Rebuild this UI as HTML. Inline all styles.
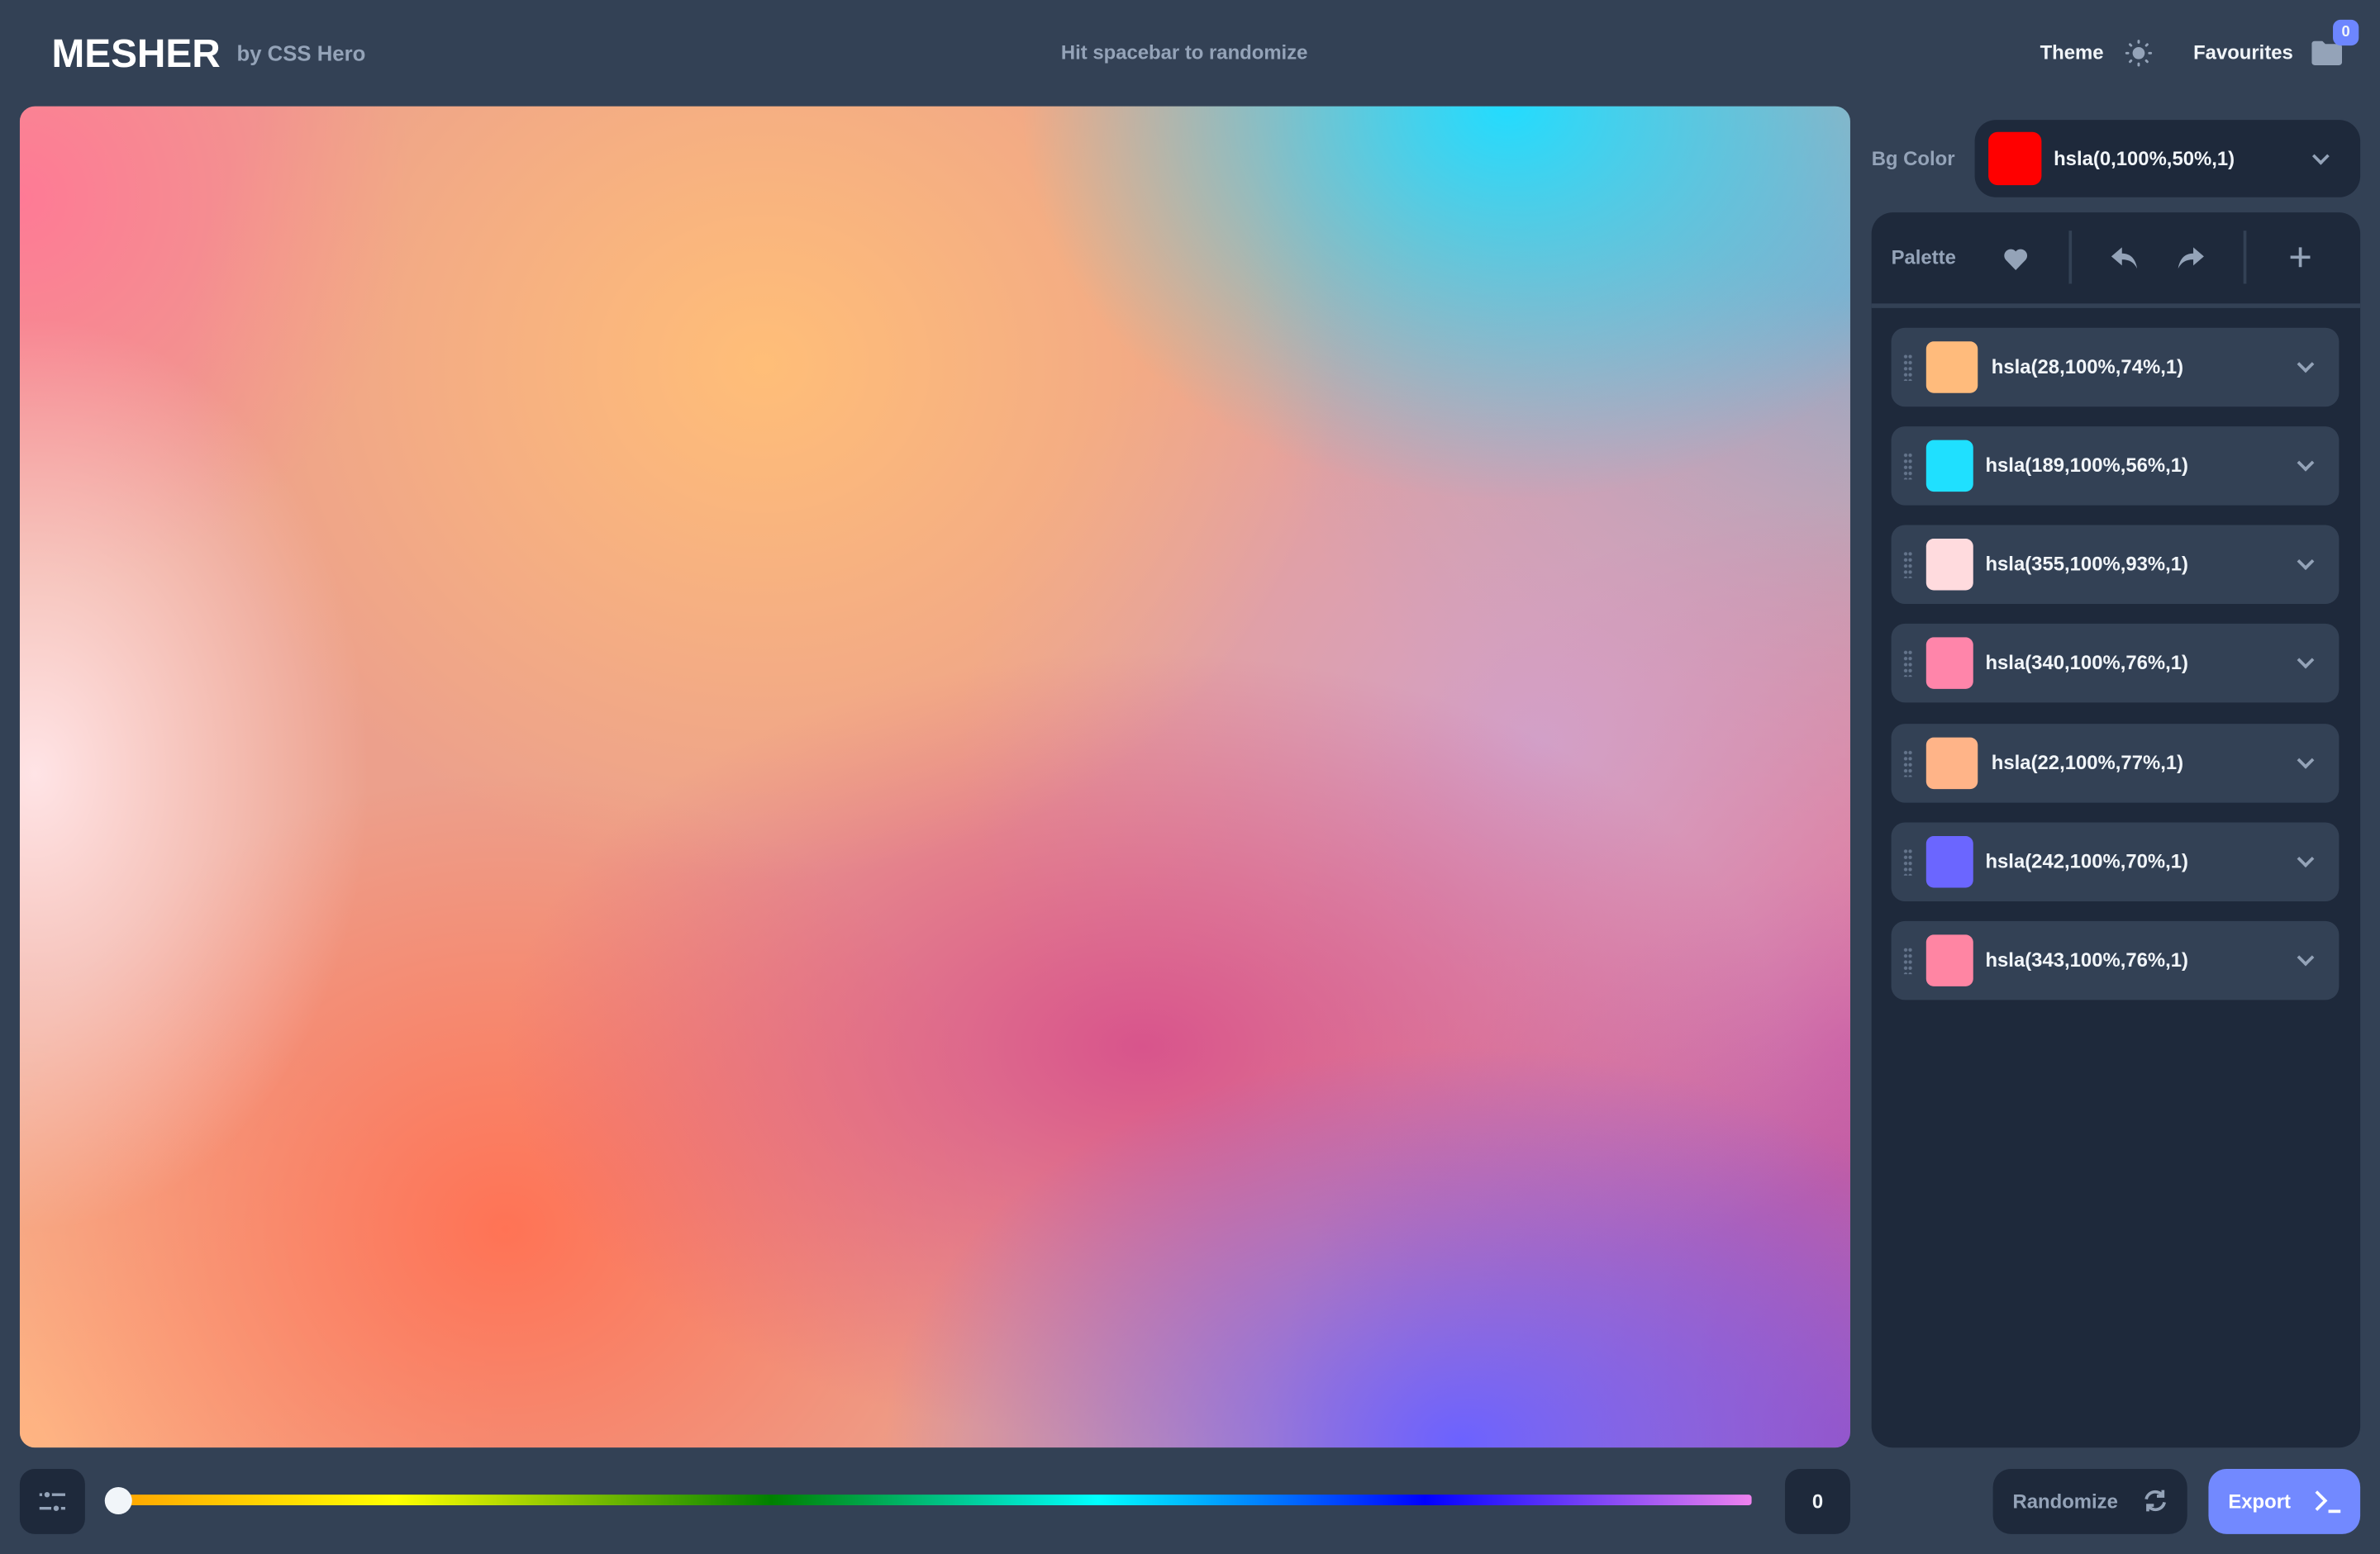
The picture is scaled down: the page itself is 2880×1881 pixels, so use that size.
<!DOCTYPE html>
<html><head><meta charset="utf-8"><style>
*{box-sizing:border-box;margin:0;padding:0}
html,body{width:2880px;height:1880px;overflow:hidden;background:#334155}
#w{position:absolute;left:0;top:0;width:1568px;height:1024px;transform:scale(1.83673);transform-origin:0 0;font-family:"Liberation Sans",sans-serif;font-weight:bold;color:#f1f5f9}
.a{position:absolute}
.canvas{left:13px;top:70px;width:1206px;height:884px;border-radius:10px;background:
radial-gradient(ellipse 320px 260px at 980px 0px,rgba(34,220,255,1),rgba(34,220,255,0)),
radial-gradient(ellipse 380px 340px at 490px 170px,rgba(255,190,120,1),rgba(255,190,120,0)),
radial-gradient(ellipse 220px 300px at 10px 440px,rgba(255,228,230,1),rgba(255,228,230,0)),
radial-gradient(ellipse 260px 260px at 0px 60px,rgba(255,120,150,.95),rgba(255,120,150,0)),
radial-gradient(ellipse 380px 260px at 950px 880px,rgba(108,98,255,1),rgba(108,98,255,0)),
radial-gradient(ellipse 420px 260px at 740px 620px,rgba(215,80,140,.95),rgba(215,80,140,0)),
radial-gradient(ellipse 340px 300px at 320px 740px,rgba(255,115,85,1),rgba(255,115,85,0)),
radial-gradient(ellipse 380px 340px at 1000px 420px,rgba(210,160,200,1),rgba(210,160,200,0)),
radial-gradient(ellipse 380px 380px at 1206px 884px,rgba(165,80,180,1),rgba(165,80,180,0)),
radial-gradient(ellipse 380px 360px at 1206px 620px,rgba(220,90,150,1),rgba(220,90,150,0)),
radial-gradient(ellipse 320px 320px at 0 884px,rgba(255,180,130,1),rgba(255,180,130,0)),
radial-gradient(ellipse 400px 360px at 1206px 120px,rgba(140,170,200,1),rgba(140,170,200,0)),
#eca08c}
.dd{background:#1e293b;border-radius:14px}
.row{left:1246px;width:295px;height:52px;background:#334155;border-radius:9px}
.sw{position:absolute;left:23px;top:9px;width:33px;height:34px;border-radius:5px}
.row .t{position:absolute;left:62px;top:18px;font-size:13px}
.chev{position:absolute;right:18px;top:20px;width:8px;height:8px;border-right:2px solid #94a3b8;border-bottom:2px solid #94a3b8;transform:rotate(45deg)}
.grip{position:absolute;left:8px;top:17px;width:6px;height:18px;background:radial-gradient(circle,#64748b 1px,transparent 1.3px) 0 0/3px 4px}
</style></head><body><div id="w">
<div class="a" style="left:34px;top:20px;font-size:26px;font-weight:900;color:#fff;transform:scaleX(1.0);transform-origin:0 0">MESHER</div>
<div class="a" style="left:156px;top:27px;font-size:14px;color:#94a3b8">by CSS Hero</div>
<div class="a" style="left:699px;top:27px;font-size:13px;color:#94a3b8">Hit spacebar to randomize</div>
<div class="a" style="left:1344px;top:27px;font-size:13px">Theme</div>
<svg class="a" style="left:1400px;top:26px" width="18" height="18" viewBox="0 0 18 18" fill="#94a3b8"><circle cx="9" cy="9" r="4"/><g stroke="#94a3b8" stroke-width="1.6" stroke-linecap="round"><path d="M9 1v1M9 16v1M1 9h1M16 9h1M3.3 3.3l.7.7M14 14l.7.7M3.3 14.7l.7-.7M14 4l.7-.7"/></g></svg>
<div class="a" style="left:1445px;top:27px;font-size:13px">Favourites</div>
<svg class="a" style="left:1523px;top:27px" width="20" height="16" viewBox="0 0 20 16"><path d="M0 2a2 2 0 012-2h5l2 2h9a2 2 0 012 2v10a2 2 0 01-2 2H2a2 2 0 01-2-2z" fill="#94a3b8"/></svg>
<div class="a" style="left:1537px;top:13px;width:17px;height:17px;border-radius:5px;background:#6d86ff;font-size:10px;text-align:center;line-height:17px">0</div>

<div class="a canvas"></div>

<div class="a" style="left:1233px;top:97px;font-size:13px;color:#94a3b8">Bg Color</div>
<div class="a dd" style="left:1301px;top:79px;width:254px;height:51px"><div class="sw" style="left:9px;top:8px;width:35px;height:35px;background:#f00;border-radius:6px"></div><div class="a" style="left:52px;top:18px;font-size:13px">hsla(0,100%,50%,1)</div><div class="chev" style="right:22px"></div></div>

<div class="a dd" style="left:1233px;top:140px;width:322px;height:814px"></div>
<div class="a" style="left:1233px;top:200px;width:322px;height:3px;background:#334155"></div>
<div class="a" style="left:1246px;top:162px;font-size:13px;color:#94a3b8">Palette</div>
<svg class="a" style="left:1320px;top:163px" width="16" height="15" viewBox="0 0 16 15"><path d="M8 15L1.5 8.3A4 4 0 018 2.7 4 4 0 0114.5 8.3z" fill="#94a3b8"/></svg>
<div class="a" style="left:1363px;top:152px;width:2px;height:35px;background:#334155"></div>
<svg class="a" style="left:1391px;top:162px" width="18" height="16" viewBox="0 0 18 16"><path d="M7 1L0 7l7 6V9c5 0 8 2 10 6-1-6-4-10-10-10z" fill="#94a3b8"/></svg>
<svg class="a" style="left:1434px;top:162px" width="18" height="16" viewBox="0 0 18 16"><path d="M11 1l7 6-7 6V9C6 9 3 11 1 15 2 9 5 5 11 5z" fill="#94a3b8"/></svg>
<div class="a" style="left:1478px;top:152px;width:2px;height:35px;background:#334155"></div>
<svg class="a" style="left:1508px;top:162px" width="15" height="15" viewBox="0 0 15 15"><path d="M7.5 1v13M1 7.5h13" stroke="#94a3b8" stroke-width="2"/></svg>

<div class="a row" style="top:216px"><div class="grip"></div><div class="sw" style="background:#ffbb7c;width:34px"></div><div class="t" style="left:66px">hsla(28,100%,74%,1)</div><div class="chev"></div></div>
<div class="a row" style="top:281px"><div class="grip"></div><div class="sw" style="background:#1fe0ff;width:31px"></div><div class="t">hsla(189,100%,56%,1)</div><div class="chev"></div></div>
<div class="a row" style="top:346px"><div class="grip"></div><div class="sw" style="background:#ffdbde;width:31px"></div><div class="t">hsla(355,100%,93%,1)</div><div class="chev"></div></div>
<div class="a row" style="top:411px"><div class="grip"></div><div class="sw" style="background:#ff85aa;width:31px"></div><div class="t">hsla(340,100%,76%,1)</div><div class="chev"></div></div>
<div class="a row" style="top:477px"><div class="grip"></div><div class="sw" style="background:#ffb488;width:34px"></div><div class="t" style="left:66px">hsla(22,100%,77%,1)</div><div class="chev"></div></div>
<div class="a row" style="top:542px"><div class="grip"></div><div class="sw" style="background:#6b66ff;width:31px"></div><div class="t">hsla(242,100%,70%,1)</div><div class="chev"></div></div>
<div class="a row" style="top:607px"><div class="grip"></div><div class="sw" style="background:#ff85a3;width:31px"></div><div class="t">hsla(343,100%,76%,1)</div><div class="chev"></div></div>

<div class="a dd" style="left:13px;top:968px;width:43px;height:43px;border-radius:10px"><svg class="a" style="left:12px;top:13px" width="19" height="17" viewBox="0 0 19 17" stroke="#94a3b8" stroke-width="1.8" fill="#94a3b8"><path d="M1 4h17M1 13h17"/><circle cx="6" cy="4" r="2.5" stroke="#1e293b" stroke-width="1.5"/><circle cx="12" cy="13" r="2.5" stroke="#1e293b" stroke-width="1.5"/></svg></div>
<div class="a" style="left:78px;top:985px;width:1076px;height:7px;border-radius:2px;background:linear-gradient(90deg,#ffa500,#ff0 17%,#008000 40%,#0ff 60%,#00f 80%,#ee82ee)"></div>
<div class="a" style="left:69px;top:980px;width:18px;height:18px;border-radius:50%;background:#f1f5f9"></div>
<div class="a dd" style="left:1176px;top:968px;width:43px;height:43px;border-radius:10px;font-size:13px;text-align:center;line-height:43px">0</div>
<div class="a dd" style="left:1313px;top:968px;width:128px;height:43px;border-radius:12px"><div class="a" style="left:13px;top:14px;font-size:13px;color:#94a3b8">Randomize</div><svg class="a" style="left:98px;top:12px" width="18" height="18" viewBox="0 0 18 18" fill="none" stroke="#94a3b8" stroke-width="2"><path d="M3 8a6 6 0 0111-2M15 10a6 6 0 01-11 2"/><path d="M14 2v4h-4M4 16v-4h4"/></svg></div>
<div class="a" style="left:1455px;top:968px;width:100px;height:43px;border-radius:12px;background:#7289ff"><div class="a" style="left:13px;top:14px;font-size:13px;color:#fff">Export</div><svg class="a" style="left:69px;top:12px" width="20" height="18" viewBox="0 0 20 18" fill="none" stroke="#fff" stroke-width="2"><path d="M2 3l6 6-6 6M10 16h8"/></svg></div>
</div></body></html>
